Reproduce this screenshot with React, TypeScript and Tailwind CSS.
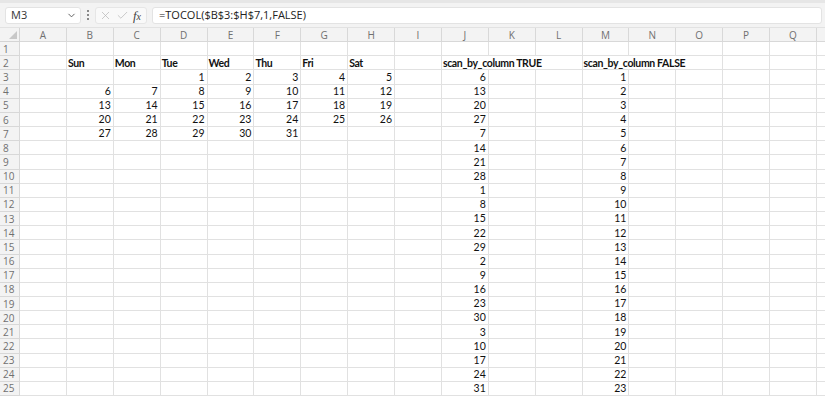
import { ChevronDown, X, Check } from 'lucide-react';

const cols = ['A', 'B', 'C', 'D', 'E', 'F', 'G', 'H', 'I', 'J', 'K', 'L', 'M', 'N', 'O', 'P', 'Q', 'R'];

const byColumn = [6, 13, 20, 27, 7, 14, 21, 28, 1, 8, 15, 22, 29, 2, 9, 16, 23, 30, 3, 10, 17, 24, 31];

type Cell = { text: string; bold?: boolean; left?: boolean };

function buildRows(): Record<string, Cell>[] {
  const rows: Record<string, Cell>[] = [];
  for (let r = 1; r <= 25; r++) rows.push({});
  const days = ['Sun', 'Mon', 'Tue', 'Wed', 'Thu', 'Fri', 'Sat'];
  days.forEach((d, i) => {
    rows[1][cols[i + 1]] = { text: d, bold: true, left: true };
  });
  rows[1].J = { text: 'scan_by_column TRUE', bold: true, left: true };
  rows[1].M = { text: 'scan_by_column FALSE', bold: true, left: true };
  for (let day = 1; day <= 31; day++) {
    const idx = day + 1; // day 1 falls on Tuesday (col D)
    const r = Math.floor(idx / 7);
    const c = idx % 7;
    rows[2 + r][cols[c + 1]] = { text: String(day) };
  }
  byColumn.forEach((v, i) => {
    rows[2 + i].J = { text: String(v) };
    rows[2 + i].M = { text: String(i + 1) };
  });
  return rows;
}

const rows = buildRows();

// cells whose right gridline is hidden because text spills over them
const spill = new Set(['2J', '2K', '2M', '2N']);

export default function App() {
  return (
    <div className="w-[825px] h-[400px] overflow-hidden bg-white font-['Lato',sans-serif]">
      <div className="h-[3px] bg-[#e6e6e6]" />
      <div className="h-[25px] bg-[#f3f3f3] flex items-center border-b border-[#e2e2e2]">
        <div className="ml-[5px] w-[76px] h-[17px] bg-white rounded-[3px] border border-[#e3e3e3] flex items-center justify-between pl-[5px] pr-[3px]">
          <span className="text-[11px] text-[#333] font-['Open_Sans',sans-serif]">M3</span>
          <ChevronDown size={11} strokeWidth={2} className="text-[#555]" />
        </div>
        <div className="ml-[6px] flex flex-col gap-[2px]">
          <span className="w-[2px] h-[2px] bg-[#666] rounded-full" />
          <span className="w-[2px] h-[2px] bg-[#666] rounded-full" />
          <span className="w-[2px] h-[2px] bg-[#666] rounded-full" />
        </div>
        <div className="ml-[6px] w-[52px] h-[17px] bg-[#f9f9f9] rounded-[3px] border border-[#e6e6e6] flex items-center justify-between px-[3px]">
          <X size={13} strokeWidth={1.3} className="text-[#b5b5b5]" />
          <Check size={13} strokeWidth={1.3} className="text-[#b5b5b5]" />
          <span className="text-[13px] italic text-[#444] font-['Liberation_Serif',serif] leading-none pr-[2px]">
            f<span className="text-[10px]">x</span>
          </span>
        </div>
        <div className="ml-[5px] mr-[3px] flex-1 h-[17px] bg-white rounded-[3px] border border-[#e3e3e3] flex items-center pl-[6px]">
          <span className="text-[11px] text-[#222] font-['Open_Sans',sans-serif]">=TOCOL($B$3:$H$7,1,FALSE)</span>
        </div>
      </div>

      <div className="grid grid-cols-[20px_repeat(18,46.875px)] auto-rows-[14.17px]">
        <div className="bg-[#f3f3f3] border-r border-b border-[#d4d4d4] relative h-[14px]">
          <div className="absolute right-[2px] bottom-[2px] w-0 h-0 border-l-[8px] border-l-transparent border-b-[8px] border-b-[#c8c8c8]" />
        </div>
        {cols.map((c) => (
          <div
            key={c}
            className="h-[14px] bg-[#f3f3f3] border-r border-b border-[#d8d8d8] flex items-center justify-center text-[10px] text-[#707070] font-['Open_Sans',sans-serif] leading-none"
          >
            {c === 'R' ? '' : c}
          </div>
        ))}
        {rows.map((row, ri) => (
          <RowCells key={ri} n={ri + 1} row={row} />
        ))}
      </div>
    </div>
  );
}

function RowCells({ n, row }: { n: number; row: Record<string, Cell> }) {
  return (
    <>
      <div className="bg-[#f3f3f3] border-r border-b border-[#d8d8d8] flex items-center justify-start pl-[3px] text-[10px] text-[#707070] font-['Open_Sans',sans-serif] leading-none">
        {n}
      </div>
      {cols.map((c) => {
        const cell = row[c];
        const noRight = spill.has(`${n}${c}`);
        return (
          <div
            key={c}
            className={`relative border-b border-[#e1e1e1] flex items-center text-[10.5px] leading-none text-[#111] ${
              noRight ? '' : 'border-r'
            } ${cell?.left ? 'justify-start pl-[1px]' : 'justify-end pr-[2px]'}`}
          >
            {cell && (
              <span
                className={`whitespace-nowrap ${cell.bold ? 'font-bold tracking-[-0.35px]' : ''} ${
                  cell.left ? 'absolute left-[1px]' : ''
                }`}
              >
                {cell.text}
              </span>
            )}
          </div>
        );
      })}
    </>
  );
}
